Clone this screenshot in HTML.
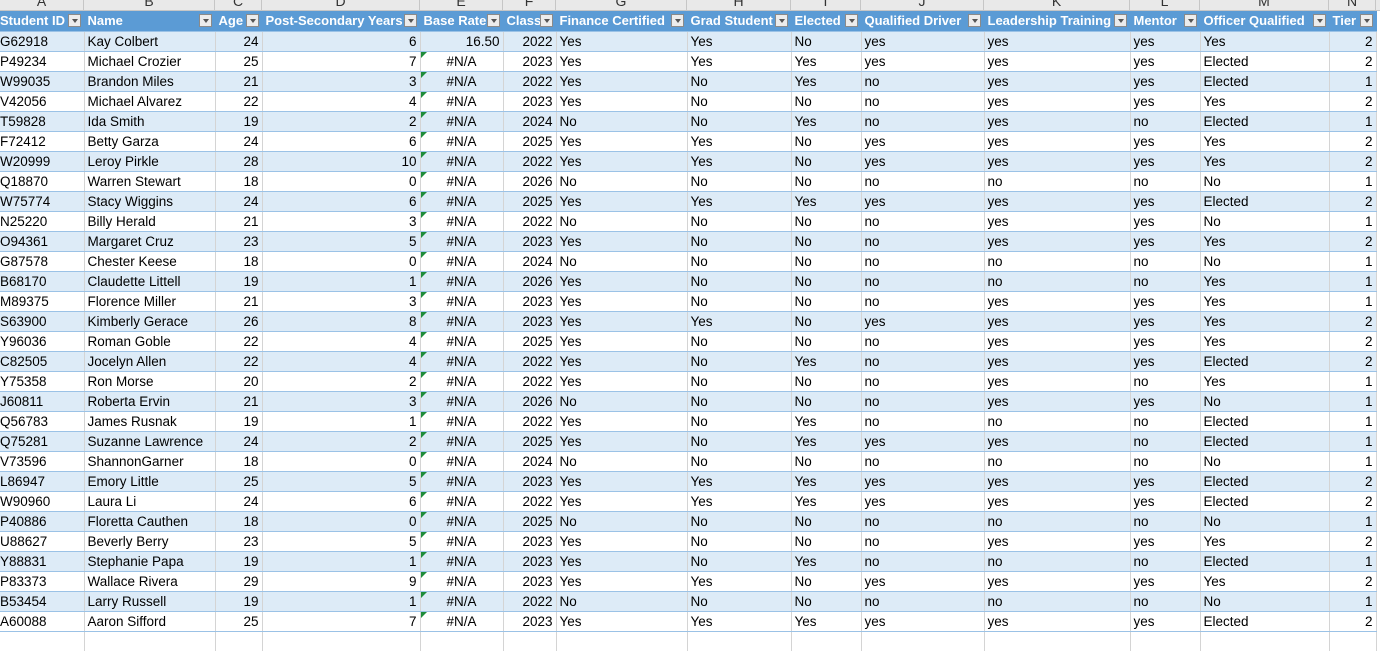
<!DOCTYPE html>
<html><head><meta charset="utf-8"><style>
*{margin:0;padding:0;box-sizing:border-box}
body{width:1380px;height:639px;overflow:hidden;background:#fff;font-family:"Liberation Sans",Arial,sans-serif;font-size:13.5px;color:#000;position:relative}
.lt{position:absolute;left:0;top:0;height:11px;width:1380px;background:#e9e9e9;border-bottom:1px solid #c6c6c6;overflow:hidden}
.lt div{position:absolute;top:0;height:11px;border-right:1px solid #c6c6c6;text-align:center;line-height:2px;font-size:14px;color:#333}
table{position:absolute;left:0;top:11px;border-collapse:collapse;table-layout:fixed;width:1376px}
td,th{height:20px;padding:0 3px;overflow:hidden;white-space:nowrap;border-right:1px solid #d4d4d4;border-bottom:1px solid #9bc2e6;text-align:left;vertical-align:middle}
th{background:#5b9bd5;color:#fff;font-weight:bold;font-size:13px;position:relative;border-right:1px solid #5b9bd5;border-bottom:1px solid #9bc2e6;padding-right:18px}
th:first-child{padding-left:0}
th i{position:absolute;right:3px;top:3px;width:13px;height:13px;background:#ececec;border:1px solid #8a8a8a}
th i:after{content:"";position:absolute;left:3px;top:4px;border-left:3px solid transparent;border-right:3px solid transparent;border-top:4px solid #555}
tr:nth-child(even) td{background:#ddebf7}
td:nth-child(1){padding-left:0}
td:nth-child(3),td:nth-child(4),td:nth-child(6),td:nth-child(14){text-align:right}
td:nth-child(5){text-align:center;position:relative}
td.r{text-align:right!important}
td.g:before{content:"";position:absolute;left:0;top:0;border-top:6px solid #1e8c3a;border-right:6px solid transparent}
.f td{background:#fff!important}
</style></head><body>
<div class="lt">
<div style="left:0;width:84px">A</div><div style="left:84px;width:131px">B</div><div style="left:215px;width:47px">C</div><div style="left:262px;width:158px">D</div><div style="left:420px;width:83px">E</div><div style="left:503px;width:53px">F</div><div style="left:556px;width:131px">G</div><div style="left:687px;width:104px">H</div><div style="left:791px;width:70px">I</div><div style="left:861px;width:123px">J</div><div style="left:984px;width:146px">K</div><div style="left:1130px;width:70px">L</div><div style="left:1200px;width:129px">M</div><div style="left:1329px;width:47px">N</div>
</div>
<table>
<colgroup><col style="width:84px"><col style="width:131px"><col style="width:47px"><col style="width:158px"><col style="width:83px"><col style="width:53px"><col style="width:131px"><col style="width:104px"><col style="width:70px"><col style="width:123px"><col style="width:146px"><col style="width:70px"><col style="width:129px"><col style="width:47px"></colgroup>
<tr><th>Student ID<i></i></th><th>Name<i></i></th><th>Age<i></i></th><th>Post-Secondary Years<i></i></th><th>Base Rate<i></i></th><th>Class<i></i></th><th>Finance Certified<i></i></th><th>Grad Student<i></i></th><th>Elected<i></i></th><th>Qualified Driver<i></i></th><th>Leadership Training<i></i></th><th>Mentor<i></i></th><th>Officer Qualified<i></i></th><th>Tier<i></i></th></tr>
<tr><td>G62918</td><td>Kay Colbert</td><td>24</td><td>6</td><td class="r">16.50</td><td>2022</td><td>Yes</td><td>Yes</td><td>No</td><td>yes</td><td>yes</td><td>yes</td><td>Yes</td><td>2</td></tr>
<tr><td>P49234</td><td>Michael Crozier</td><td>25</td><td>7</td><td class="g">#N/A</td><td>2023</td><td>Yes</td><td>Yes</td><td>Yes</td><td>yes</td><td>yes</td><td>yes</td><td>Elected</td><td>2</td></tr>
<tr><td>W99035</td><td>Brandon Miles</td><td>21</td><td>3</td><td class="g">#N/A</td><td>2022</td><td>Yes</td><td>No</td><td>Yes</td><td>no</td><td>yes</td><td>yes</td><td>Elected</td><td>1</td></tr>
<tr><td>V42056</td><td>Michael Alvarez</td><td>22</td><td>4</td><td class="g">#N/A</td><td>2023</td><td>Yes</td><td>No</td><td>No</td><td>no</td><td>yes</td><td>yes</td><td>Yes</td><td>2</td></tr>
<tr><td>T59828</td><td>Ida Smith</td><td>19</td><td>2</td><td class="g">#N/A</td><td>2024</td><td>No</td><td>No</td><td>Yes</td><td>no</td><td>yes</td><td>no</td><td>Elected</td><td>1</td></tr>
<tr><td>F72412</td><td>Betty Garza</td><td>24</td><td>6</td><td class="g">#N/A</td><td>2025</td><td>Yes</td><td>Yes</td><td>No</td><td>yes</td><td>yes</td><td>yes</td><td>Yes</td><td>2</td></tr>
<tr><td>W20999</td><td>Leroy Pirkle</td><td>28</td><td>10</td><td class="g">#N/A</td><td>2022</td><td>Yes</td><td>Yes</td><td>No</td><td>yes</td><td>yes</td><td>yes</td><td>Yes</td><td>2</td></tr>
<tr><td>Q18870</td><td>Warren Stewart</td><td>18</td><td>0</td><td class="g">#N/A</td><td>2026</td><td>No</td><td>No</td><td>No</td><td>no</td><td>no</td><td>no</td><td>No</td><td>1</td></tr>
<tr><td>W75774</td><td>Stacy Wiggins</td><td>24</td><td>6</td><td class="g">#N/A</td><td>2025</td><td>Yes</td><td>Yes</td><td>Yes</td><td>yes</td><td>yes</td><td>yes</td><td>Elected</td><td>2</td></tr>
<tr><td>N25220</td><td>Billy Herald</td><td>21</td><td>3</td><td class="g">#N/A</td><td>2022</td><td>No</td><td>No</td><td>No</td><td>no</td><td>yes</td><td>yes</td><td>No</td><td>1</td></tr>
<tr><td>O94361</td><td>Margaret Cruz</td><td>23</td><td>5</td><td class="g">#N/A</td><td>2023</td><td>Yes</td><td>No</td><td>No</td><td>no</td><td>yes</td><td>yes</td><td>Yes</td><td>2</td></tr>
<tr><td>G87578</td><td>Chester Keese</td><td>18</td><td>0</td><td class="g">#N/A</td><td>2024</td><td>No</td><td>No</td><td>No</td><td>no</td><td>no</td><td>no</td><td>No</td><td>1</td></tr>
<tr><td>B68170</td><td>Claudette Littell</td><td>19</td><td>1</td><td class="g">#N/A</td><td>2026</td><td>Yes</td><td>No</td><td>No</td><td>no</td><td>no</td><td>no</td><td>Yes</td><td>1</td></tr>
<tr><td>M89375</td><td>Florence Miller</td><td>21</td><td>3</td><td class="g">#N/A</td><td>2023</td><td>Yes</td><td>No</td><td>No</td><td>no</td><td>yes</td><td>yes</td><td>Yes</td><td>1</td></tr>
<tr><td>S63900</td><td>Kimberly Gerace</td><td>26</td><td>8</td><td class="g">#N/A</td><td>2023</td><td>Yes</td><td>Yes</td><td>No</td><td>yes</td><td>yes</td><td>yes</td><td>Yes</td><td>2</td></tr>
<tr><td>Y96036</td><td>Roman Goble</td><td>22</td><td>4</td><td class="g">#N/A</td><td>2025</td><td>Yes</td><td>No</td><td>No</td><td>no</td><td>yes</td><td>yes</td><td>Yes</td><td>2</td></tr>
<tr><td>C82505</td><td>Jocelyn Allen</td><td>22</td><td>4</td><td class="g">#N/A</td><td>2022</td><td>Yes</td><td>No</td><td>Yes</td><td>no</td><td>yes</td><td>yes</td><td>Elected</td><td>2</td></tr>
<tr><td>Y75358</td><td>Ron Morse</td><td>20</td><td>2</td><td class="g">#N/A</td><td>2022</td><td>Yes</td><td>No</td><td>No</td><td>no</td><td>yes</td><td>no</td><td>Yes</td><td>1</td></tr>
<tr><td>J60811</td><td>Roberta Ervin</td><td>21</td><td>3</td><td class="g">#N/A</td><td>2026</td><td>No</td><td>No</td><td>No</td><td>no</td><td>yes</td><td>yes</td><td>No</td><td>1</td></tr>
<tr><td>Q56783</td><td>James Rusnak</td><td>19</td><td>1</td><td class="g">#N/A</td><td>2022</td><td>Yes</td><td>No</td><td>Yes</td><td>no</td><td>no</td><td>no</td><td>Elected</td><td>1</td></tr>
<tr><td>Q75281</td><td>Suzanne Lawrence</td><td>24</td><td>2</td><td class="g">#N/A</td><td>2025</td><td>Yes</td><td>No</td><td>Yes</td><td>yes</td><td>yes</td><td>no</td><td>Elected</td><td>1</td></tr>
<tr><td>V73596</td><td>ShannonGarner</td><td>18</td><td>0</td><td class="g">#N/A</td><td>2024</td><td>No</td><td>No</td><td>No</td><td>no</td><td>no</td><td>no</td><td>No</td><td>1</td></tr>
<tr><td>L86947</td><td>Emory Little</td><td>25</td><td>5</td><td class="g">#N/A</td><td>2023</td><td>Yes</td><td>Yes</td><td>Yes</td><td>yes</td><td>yes</td><td>yes</td><td>Elected</td><td>2</td></tr>
<tr><td>W90960</td><td>Laura Li</td><td>24</td><td>6</td><td class="g">#N/A</td><td>2022</td><td>Yes</td><td>Yes</td><td>Yes</td><td>yes</td><td>yes</td><td>yes</td><td>Elected</td><td>2</td></tr>
<tr><td>P40886</td><td>Floretta Cauthen</td><td>18</td><td>0</td><td class="g">#N/A</td><td>2025</td><td>No</td><td>No</td><td>No</td><td>no</td><td>no</td><td>no</td><td>No</td><td>1</td></tr>
<tr><td>U88627</td><td>Beverly Berry</td><td>23</td><td>5</td><td class="g">#N/A</td><td>2023</td><td>Yes</td><td>No</td><td>No</td><td>no</td><td>yes</td><td>yes</td><td>Yes</td><td>2</td></tr>
<tr><td>Y88831</td><td>Stephanie Papa</td><td>19</td><td>1</td><td class="g">#N/A</td><td>2023</td><td>Yes</td><td>No</td><td>Yes</td><td>no</td><td>no</td><td>no</td><td>Elected</td><td>1</td></tr>
<tr><td>P83373</td><td>Wallace Rivera</td><td>29</td><td>9</td><td class="g">#N/A</td><td>2023</td><td>Yes</td><td>Yes</td><td>No</td><td>yes</td><td>yes</td><td>yes</td><td>Yes</td><td>2</td></tr>
<tr><td>B53454</td><td>Larry Russell</td><td>19</td><td>1</td><td class="g">#N/A</td><td>2022</td><td>No</td><td>No</td><td>No</td><td>no</td><td>no</td><td>no</td><td>No</td><td>1</td></tr>
<tr><td>A60088</td><td>Aaron Sifford</td><td>25</td><td>7</td><td class="g">#N/A</td><td>2023</td><td>Yes</td><td>Yes</td><td>Yes</td><td>yes</td><td>yes</td><td>yes</td><td>Elected</td><td>2</td></tr>
<tr class="f"><td style="border-bottom:none"></td><td style="border-bottom:none"></td><td style="border-bottom:none"></td><td style="border-bottom:none"></td><td style="border-bottom:none"></td><td style="border-bottom:none"></td><td style="border-bottom:none"></td><td style="border-bottom:none"></td><td style="border-bottom:none"></td><td style="border-bottom:none"></td><td style="border-bottom:none"></td><td style="border-bottom:none"></td><td style="border-bottom:none"></td><td style="border-bottom:none"></td></tr>
</table>
</body></html>
